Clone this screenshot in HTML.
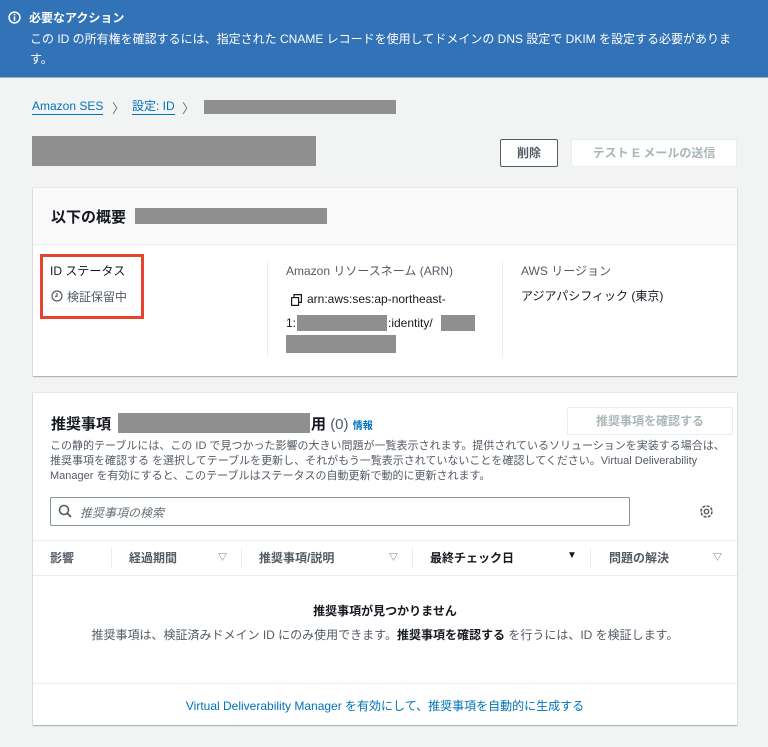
<!DOCTYPE html>
<html><head><meta charset="utf-8"><style>
*{margin:0;padding:0;box-sizing:border-box}
body{width:768px;height:747px;background:#f2f3f3;font-family:"Liberation Sans","Noto Sans CJK JP",sans-serif;color:#16191f;position:relative;overflow:hidden;font-size:12px}
.a{position:absolute;white-space:nowrap}
.g{position:absolute;background:#8f8f8f}
.card{position:absolute;left:33px;width:704px;background:#fff;box-shadow:0 1px 1px rgba(0,26,56,.3),0 0 0 1px #e6e8e8}
.lnk{color:#0073bb}
</style></head><body>
<div class="a" style="left:0;top:0;width:768px;height:78px;background:#3272b7;border-bottom:1px solid #9bb0c8"></div>
<svg class="a" style="left:8px;top:11px" width="13" height="13" viewBox="0 0 12 12"><circle cx="6" cy="6" r="5" fill="none" stroke="#fff" stroke-width="1.4"/><rect x="5.3" y="5" width="1.4" height="4" fill="#fff"/><rect x="5.3" y="2.6" width="1.4" height="1.4" fill="#fff"/></svg>
<div class="a" style="left:29px;top:9px;color:#fff;font-weight:bold;font-size:12px">必要なアクション</div>
<div class="a" style="left:30px;top:30px;color:#fff;font-size:12px">この ID の所有権を確認するには、指定された CNAME レコードを使用してドメインの DNS 設定で DKIM を設定する必要がありま</div>
<div class="a" style="left:30px;top:50px;color:#fff;font-size:12px">す。</div>

<div class="a lnk" style="left:32px;top:99px;font-size:12px;border-bottom:1px solid #0073bb;line-height:15px">Amazon SES</div>
<div class="a" style="left:112px;top:98px;color:#687078;font-size:13px">〉</div>
<div class="a lnk" style="left:132px;top:99px;font-size:12px;border-bottom:1px solid #0073bb;line-height:15px">設定: ID</div>
<div class="a" style="left:182px;top:98px;color:#687078;font-size:13px">〉</div>
<div class="g" style="left:204px;top:100px;width:192px;height:14px"></div>
<div class="g" style="left:32px;top:136px;width:284px;height:30px"></div>
<div class="a" style="left:500px;top:139px;width:58px;height:28px;border:1px solid #545b64;border-radius:2px;background:#fff;font-weight:bold;text-align:center;line-height:26px;color:#545b64">削除</div>
<div class="a" style="left:571px;top:139px;width:166px;height:28px;border:1px solid #eaeded;border-radius:2px;background:#fff;font-weight:bold;text-align:center;line-height:26px;color:#aab7b8">テスト E メールの送信</div>

<div class="card" style="top:188px;height:188px">
<div class="a" style="left:0;top:0;width:704px;height:57px;background:#fafafa;border-bottom:1px solid #eaeded"></div>
<div class="a" style="left:18px;top:18px;font-size:15px;font-weight:bold">以下の概要</div>
<div class="g" style="left:102px;top:20px;width:192px;height:16px"></div>
<div class="a" style="left:7px;top:66px;width:104px;height:65px;border:3px solid #e8432e"></div>
<div class="a" style="left:17px;top:74px">ID ステータス</div>
<svg class="a" style="left:18px;top:102px" width="12" height="12" viewBox="0 0 12 12"><circle cx="6" cy="6" r="5" fill="none" stroke="#545b64" stroke-width="1.2"/><path d="M6 3v3.3H4" fill="none" stroke="#545b64" stroke-width="1.2"/></svg>
<div class="a" style="left:34px;top:100px;color:#545b64">検証保留中</div>
<div class="a" style="left:234px;top:73px;width:1px;height:96px;background:#eaeded"></div>
<div class="a" style="left:253px;top:74px;color:#545b64">Amazon リソースネーム (ARN)</div>
<svg class="a" style="left:258px;top:106px" width="11" height="12" viewBox="0 0 11 12"><rect x="0.6" y="3.6" width="7" height="7.8" fill="none" stroke="#16191f" stroke-width="1.2"/><path d="M3 3.6V0.6h7.4v7.8H7.6" fill="none" stroke="#16191f" stroke-width="1.2"/></svg>
<div class="a" style="left:274px;top:104px">arn:aws:ses:ap-northeast-</div>
<div class="a" style="left:253px;top:128px">1:</div>
<div class="g" style="left:264px;top:127px;width:90px;height:16px"></div>
<div class="a" style="left:355px;top:128px">:identity/</div>
<div class="g" style="left:408px;top:127px;width:34px;height:16px"></div>
<div class="g" style="left:253px;top:147px;width:110px;height:18px"></div>
<div class="a" style="left:469px;top:73px;width:1px;height:96px;background:#eaeded"></div>
<div class="a" style="left:488px;top:74px;color:#545b64">AWS リージョン</div>
<div class="a" style="left:488px;top:99px">アジアパシフィック (東京)</div>
</div>

<div class="card" style="top:393px;height:332px">
<div class="a" style="left:18px;top:20px;font-size:15px;font-weight:bold">推奨事項</div>
<div class="g" style="left:85px;top:20px;width:192px;height:20px"></div>
<div class="a" style="left:278px;top:20px;font-size:15px"><b>用</b> <span style="color:#545b64">(0)</span> <span class="lnk" style="font-size:10px;font-weight:bold">情報</span></div>
<div class="a" style="left:534px;top:14px;width:166px;height:28px;border:1px solid #eaeded;border-radius:2px;text-align:center;line-height:26px;color:#aab7b8;font-weight:bold">推奨事項を確認する</div>
<div class="a" style="left:17px;top:46px;font-size:11px;line-height:15px;color:#545b64;white-space:normal;width:676px">この静的テーブルには、この ID で見つかった影響の大きい問題が一覧表示されます。提供されているソリューションを実装する場合は、推奨事項を確認する を選択してテーブルを更新し、それがもう一覧表示されていないことを確認してください。Virtual Deliverability Manager を有効にすると、このテーブルはステータスの自動更新で動的に更新されます。</div>
<div class="a" style="left:17px;top:104px;width:580px;height:29px;border:1px solid #879596;border-radius:2px"></div>
<svg class="a" style="left:25px;top:111px" width="14" height="14" viewBox="0 0 14 14"><circle cx="6" cy="6" r="4.5" fill="none" stroke="#545b64" stroke-width="1.6"/><path d="M9.3 9.3L13 13" stroke="#545b64" stroke-width="1.8"/></svg>
<div class="a" style="left:47px;top:111px;color:#687078;font-style:italic">推奨事項の検索</div>
<svg class="a" style="left:666px;top:111px" width="15" height="15" viewBox="0 0 15 15"><circle cx="7.5" cy="7.5" r="5.5" fill="none" stroke="#545b64" stroke-width="1.6" stroke-dasharray="3 1.3"/><circle cx="7.5" cy="7.5" r="2.2" fill="none" stroke="#545b64" stroke-width="1.4"/></svg>
<div class="a" style="left:0;top:147px;width:704px;height:1px;background:#eaeded"></div>
<div class="a" style="left:0;top:182px;width:704px;height:1px;background:#eaeded"></div>
<div class="a" style="left:17px;top:156px;font-weight:bold;color:#545b64">影響</div>
<div class="a" style="left:78px;top:155px;width:1px;height:20px;background:#eaeded"></div>
<div class="a" style="left:96px;top:156px;font-weight:bold;color:#545b64">経過期間</div>
<div class="a" style="left:185px;top:157px;font-size:9px;color:#545b64">▽</div>
<div class="a" style="left:208px;top:155px;width:1px;height:20px;background:#eaeded"></div>
<div class="a" style="left:226px;top:156px;font-weight:bold;color:#545b64">推奨事項/説明</div>
<div class="a" style="left:356px;top:157px;font-size:9px;color:#545b64">▽</div>
<div class="a" style="left:379px;top:155px;width:1px;height:20px;background:#eaeded"></div>
<div class="a" style="left:397px;top:156px;font-weight:bold">最終チェック日</div>
<div class="a" style="left:534px;top:157px;font-size:10px">▼</div>
<div class="a" style="left:557px;top:155px;width:1px;height:20px;background:#eaeded"></div>
<div class="a" style="left:576px;top:156px;font-weight:bold;color:#545b64">問題の解決</div>
<div class="a" style="left:680px;top:157px;font-size:9px;color:#545b64">▽</div>
<div class="a" style="left:0;top:209px;width:704px;text-align:center;font-weight:bold">推奨事項が見つかりません</div>
<div class="a" style="left:0;top:233px;width:704px;text-align:center;color:#545b64">推奨事項は、検証済みドメイン ID にのみ使用できます。<b style="color:#16191f">推奨事項を確認する</b> を行うには、ID を検証します。</div>
<div class="a" style="left:0;top:290px;width:704px;height:1px;background:#eaeded"></div>
<div class="a lnk" style="left:0;top:304px;width:704px;text-align:center">Virtual Deliverability Manager を有効にして、推奨事項を自動的に生成する</div>
</div>
</body></html>
